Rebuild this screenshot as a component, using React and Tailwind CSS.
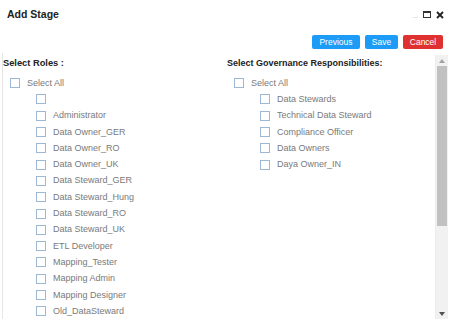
import React from 'react';

const ROLES = [
  '',
  'Administrator',
  'Data Owner_GER',
  'Data Owner_RO',
  'Data Owner_UK',
  'Data Steward_GER',
  'Data Steward_Hung',
  'Data Steward_RO',
  'Data Steward_UK',
  'ETL Developer',
  'Mapping_Tester',
  'Mapping Admin',
  'Mapping Designer',
  'Old_DataSteward',
];

const RESPONSIBILITIES = [
  'Data Stewards',
  'Technical Data Steward',
  'Compliance Officer',
  'Data Owners',
  'Daya Owner_IN',
];

const Box = () => (
  <span className="inline-block w-[10px] h-[10px] border border-[#9db8d2] bg-white shrink-0" />
);

const Row = ({ label, indent }) => (
  <div className={`flex items-center h-[16.3px] ${indent}`}>
    <Box />
    <span className="ml-[7px] text-[9px] text-[#7a7a7a] leading-none whitespace-nowrap">{label}</span>
  </div>
);

export default function App() {
  return (
    <div
      className="w-[449px] h-[319px] bg-white overflow-hidden flex flex-col"
      style={{ fontFamily: '"Liberation Sans", Arial, sans-serif' }}
    >
      <header className="flex items-center justify-between h-[28px] pl-[7px] pr-[5px] pt-[1px]">
        <h1 className="text-[10.5px] font-bold text-[#222]">Add Stage</h1>
        <div className="flex items-center gap-[5px]">
          <span className="w-[5px] h-px bg-[#e4e4e4] mt-[6px]" />
          <span className="w-[8px] h-[7px] border border-[#333] border-t-2" />
          <svg width="8" height="8" viewBox="0 0 8 8">
            <path d="M1 1 L7 7 M7 1 L1 7" stroke="#222" strokeWidth="1.8" />
          </svg>
        </div>
      </header>

      <div className="flex justify-end gap-[5px] pr-[6px] pt-[7px] h-[25px]">
        <button className="w-[48px] h-[14px] rounded-[2px] bg-[#1c9cf6] text-white text-[8.5px] leading-none">Previous</button>
        <button className="w-[33px] h-[14px] rounded-[2px] bg-[#1c9cf6] text-white text-[8.5px] leading-none">Save</button>
        <button className="w-[40px] h-[14px] rounded-[2px] bg-[#e03131] text-white text-[8.5px] leading-none">Cancel</button>
      </div>

      <div className="flex flex-1 min-h-0 ml-[2px] border-l border-[#e6e6e6] pt-[2px]">
        <div className="flex flex-1 min-w-0">
          <section className="w-[224px]">
            <h2 className="text-[9.3px] font-bold text-[#222] h-[17px] leading-[17px]">Select Roles :</h2>
            <div className="pt-[3px]">
              <Row label="Select All" indent="pl-[7px]" />
              {ROLES.map((r, i) => (
                <Row key={i} label={r} indent="pl-[33px]" />
              ))}
            </div>
          </section>
          <section className="flex-1">
            <h2 className="text-[9px] font-bold text-[#222] h-[17px] leading-[17px]">Select Governance Responsibilities:</h2>
            <div className="pt-[3px]">
              <Row label="Select All" indent="pl-[7px]" />
              {RESPONSIBILITIES.map((r) => (
                <Row key={r} label={r} indent="pl-[33px]" />
              ))}
            </div>
          </section>
        </div>

        <div className="w-[13px] mr-[1px] bg-[#f1f1f1] flex flex-col items-center border-l border-[#ececec]">
          <div className="h-[11px] flex items-center justify-center">
            <svg width="6" height="4" viewBox="0 0 6 4"><path d="M0 4 L3 0 L6 4 Z" fill="#a3a3a3" /></svg>
          </div>
          <div className="w-[10px] h-[160px] bg-[#c1c1c1]" />
          <div className="flex-1" />
          <div className="h-[10px] flex items-center justify-center">
            <svg width="6" height="4" viewBox="0 0 6 4"><path d="M0 0 L6 0 L3 4 Z" fill="#505050" /></svg>
          </div>
        </div>
      </div>
    </div>
  );
}
